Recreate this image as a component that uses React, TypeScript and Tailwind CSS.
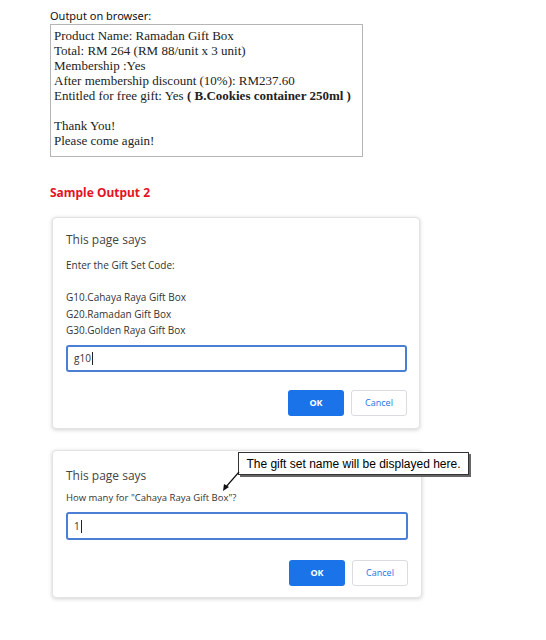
import React from 'react';

const dlgFont = { fontFamily: '"Open Sans", "Noto Sans", sans-serif' };

function Buttons() {
  return (
    <div className="flex justify-end gap-[7px]">
      <button className="w-[56px] h-[26px] rounded-[3px] bg-[#1a73e8] text-white text-[9px] font-bold">
        OK
      </button>
      <button className="w-[56px] h-[26px] rounded-[3px] bg-white border border-[#dadce0] text-[#1a73e8] text-[9px]">
        Cancel
      </button>
    </div>
  );
}

export default function App() {
  return (
    <div className="w-[546px] h-[640px] bg-white pl-[50px] pt-[9px]">
      <p className="text-[11px] leading-[14px] text-[#111]" style={{ fontFamily: '"Noto Sans", sans-serif' }}>
        Output on browser:
      </p>

      {/* output box */}
      <div
        className="mt-[1px] w-[313px] h-[133px] border border-[#b5b5b5] pl-[3px] pt-[3px] text-[13px] leading-[15px] text-[#222]"
        style={{ fontFamily: '"Liberation Serif", serif' }}
      >
        <div>Product Name: Ramadan Gift Box</div>
        <div>Total: RM 264 (RM 88/unit x 3 unit)</div>
        <div>Membership :Yes</div>
        <div>After membership discount (10%): RM237.60</div>
        <div>
          Entitled for free gift: Yes <b>( B.Cookies container 250ml )</b>
        </div>
        <div className="h-[15px]" />
        <div>Thank You!</div>
        <div>Please come again!</div>
      </div>

      <p
        className="mt-[29px] text-[12px] leading-[14px] font-bold text-[#e3141f]"
        style={{ fontFamily: '"Noto Sans", sans-serif' }}
      >
        Sample Output 2
      </p>

      {/* dialog 1 */}
      <div
        className="ml-[2px] mt-[17px] w-[368px] h-[212px] rounded-[4px] bg-white border border-[#e3e3e3] shadow-[0_1px_4px_rgba(0,0,0,0.18)] pl-[13px] pr-[12px] pt-[14px]"
        style={dlgFont}
      >
        <div className="text-[12px] leading-[16px] text-[#444]">This page says</div>
        <div className="mt-[9px] text-[10px] leading-[16px] text-[#333]">Enter the Gift Set Code:</div>
        <div className="mt-[16px] text-[10px] leading-[16.5px] text-[#333]">
          <div>G10.Cahaya Raya Gift Box</div>
          <div>G20.Ramadan Gift Box</div>
          <div>G30.Golden Raya Gift Box</div>
        </div>
        <div className="mt-[6px] h-[27px] rounded-[3px] border-2 border-[#4a7fd4] flex items-center pl-[6px] text-[10px] text-[#333]">
          g10<span className="ml-px w-px h-[13px] bg-[#222]" />
        </div>
        <div className="mt-[18px]">
          <Buttons />
        </div>
      </div>

      {/* dialog 2 */}
      <div
        className="relative ml-[2px] mt-[21px] w-[370px] h-[148px] rounded-[4px] bg-white border border-[#e3e3e3] shadow-[0_1px_4px_rgba(0,0,0,0.18)] pl-[13px] pr-[13px] pt-[17px]"
        style={dlgFont}
      >
        <div className="text-[12px] leading-[16px] text-[#444]">This page says</div>
        <div className="mt-[6px] text-[9.5px] leading-[16px] text-[#333]">How many for "Cahaya Raya Gift Box"?</div>
        <div className="mt-[6px] h-[28px] rounded-[3px] border-2 border-[#4a7fd4] flex items-center pl-[6px] text-[10px] text-[#333]">
          1<span className="ml-px w-px h-[13px] bg-[#222]" />
        </div>
        <div className="mt-[20px]">
          <Buttons />
        </div>

        {/* callout */}
        <div
          className="absolute left-[185px] top-[1px] w-[231px] h-[23px] bg-white border border-[#333] shadow-[2px_2px_0_#666] flex items-center justify-center text-[12px] text-black"
          style={{ fontFamily: '"Liberation Sans", sans-serif' }}
        >
          The gift set name will be displayed here.
        </div>
        <svg className="absolute left-[168px] top-[20px]" width="20" height="22" viewBox="0 0 20 22">
          <line x1="18" y1="1" x2="4" y2="17" stroke="#111" strokeWidth="1.2" />
          <polygon points="2,20 3,13 8,16" fill="#111" />
        </svg>
      </div>
    </div>
  );
}
